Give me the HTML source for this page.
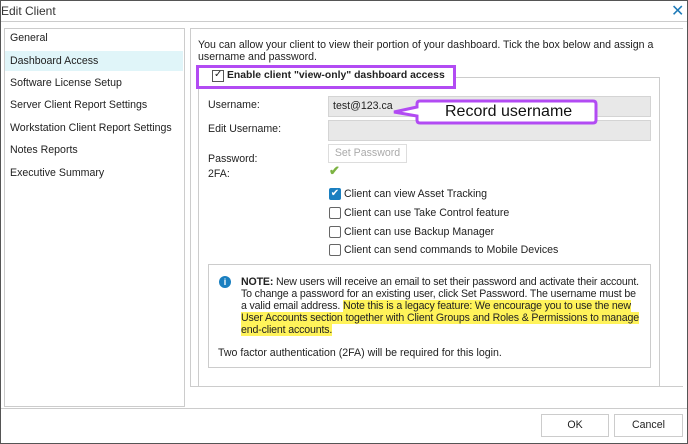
<!DOCTYPE html><html><head><style>
body{margin:0;width:688px;height:444px;overflow:hidden;background:#fff;font-family:"Liberation Sans",sans-serif;font-size:10.6px;color:#222;position:relative}
.a{position:absolute}
.win{left:0;top:0;width:686px;height:442px;border:1px solid #555}
.li{position:absolute;left:10px}
.cb{position:absolute;width:10px;height:10px;border:1px solid #666;border-radius:2px;background:#fff}
</style></head><body>
<div class="a win"></div>
<div class="a" style="left:1px;top:4px;font-size:12px;color:#333">Edit Client</div>
<div class="a" style="left:671px;top:1px;font-size:16px;color:#1e7ab8">✕</div>
<div class="a" style="left:1px;top:21px;width:686px;height:1px;background:#ccc"></div>
<div class="a" style="left:4px;top:28px;width:179px;height:377px;border:1px solid #ccc"></div>
<div class="a" style="left:5px;top:51px;width:178px;height:20px;background:#e0f5f9"></div>
<div class="li" style="top:32px">General</div>
<div class="li" style="top:55px">Dashboard Access</div>
<div class="li" style="top:77px">Software License Setup</div>
<div class="li" style="top:99px">Server Client Report Settings</div>
<div class="li" style="top:122px">Workstation Client Report Settings</div>
<div class="li" style="top:144px">Notes Reports</div>
<div class="li" style="top:167px">Executive Summary</div>
<div class="a" style="left:190px;top:28px;width:492px;height:357px;border:1px solid #ccc;border-right:none"></div>
<div class="a" style="left:198px;top:39px;width:470px;line-height:12px">You can allow your client to view their portion of your dashboard. Tick the box below and assign a username and password.</div>
<div class="a" style="left:198px;top:77px;width:460px;height:308px;border:1px solid #ccc"></div>
<div class="a" style="left:196px;top:65px;width:254px;height:18px;border:3px solid #b24bf3;background:#fff"></div>
<div class="cb" style="left:212px;top:70px;border-color:#555;border-radius:0"><span style="position:absolute;left:1px;top:-2px;font-size:10px">✓</span></div>
<div class="a" style="left:227px;top:70px;font-weight:bold;font-size:10.4px">Enable client "view-only" dashboard access</div>
<div class="a" style="left:208px;top:99px">Username:</div>
<div class="a" style="left:208px;top:123px">Edit Username:</div>
<div class="a" style="left:328px;top:96px;width:321px;height:19px;background:#e8e8e8;border:1px solid #d4d4d4"></div>
<div class="a" style="left:333px;top:100px">test@123.ca</div>
<div class="a" style="left:328px;top:120px;width:321px;height:19px;background:#e8e8e8;border:1px solid #d4d4d4"></div>
<svg class="a" style="left:390px;top:98px" width="212" height="30"><path d="M30 3 H203 Q206 3 206 6 V22 Q206 25 203 25 H30 Q27 25 27 22 V18 L4 14 L27 9 V6 Q27 3 30 3Z" fill="#fff" stroke="#b24bf3" stroke-width="3"/></svg>
<div class="a" style="left:445px;top:103px;font-size:16px;color:#111">Record username</div>
<div class="a" style="left:328px;top:144px;width:77px;height:17px;border:1px solid #ddd;color:#aaa;text-align:center;line-height:17px">Set Password</div>
<div class="a" style="left:208px;top:153px">Password:</div>
<div class="a" style="left:208px;top:168px">2FA:</div>
<div class="a" style="left:329px;top:163px;color:#7cb342;font-size:13px;font-weight:bold">✔</div>
<div class="cb" style="left:329px;top:188px;background:#1a7fc0;border-color:#1a7fc0;color:#fff;font-size:10px;line-height:10px;text-align:center">✔</div>
<div class="a" style="left:344px;top:188px">Client can view Asset Tracking</div>
<div class="cb" style="left:329px;top:207px"></div><div class="a" style="left:344px;top:207px">Client can use Take Control feature</div>
<div class="cb" style="left:329px;top:226px"></div><div class="a" style="left:344px;top:226px">Client can use Backup Manager</div>
<div class="cb" style="left:329px;top:244px"></div><div class="a" style="left:344px;top:244px">Client can send commands to Mobile Devices</div>
<div class="a" style="left:208px;top:264px;width:441px;height:102px;border:1px solid #ccc"></div>
<div class="a" style="left:219px;top:276px;width:12px;height:12px;border-radius:50%;background:#1a7fc0;color:#fff;font-weight:bold;font-size:9px;text-align:center;line-height:12px">i</div>
<div class="a" style="left:241px;top:276px;width:402px;line-height:12px;letter-spacing:-0.15px"><b>NOTE:</b> New users will receive an email to set their password and activate their account. To change a password for an existing user, click Set Password. The username must be a valid email address. <span style="background:#fff35a">Note this is a legacy feature: We encourage you to use the new User Accounts section together with Client Groups and Roles &amp; Permissions to manage end-client accounts.</span></div>
<div class="a" style="left:218px;top:347px">Two factor authentication (2FA) will be required for this login.</div>
<div class="a" style="left:1px;top:408px;width:686px;height:1px;background:#ccc"></div>
<div class="a" style="left:541px;top:414px;width:66px;height:21px;border:1px solid #ccc;text-align:center;line-height:21px">OK</div>
<div class="a" style="left:614px;top:414px;width:67px;height:21px;border:1px solid #ccc;text-align:center;line-height:21px">Cancel</div>
</body></html>
